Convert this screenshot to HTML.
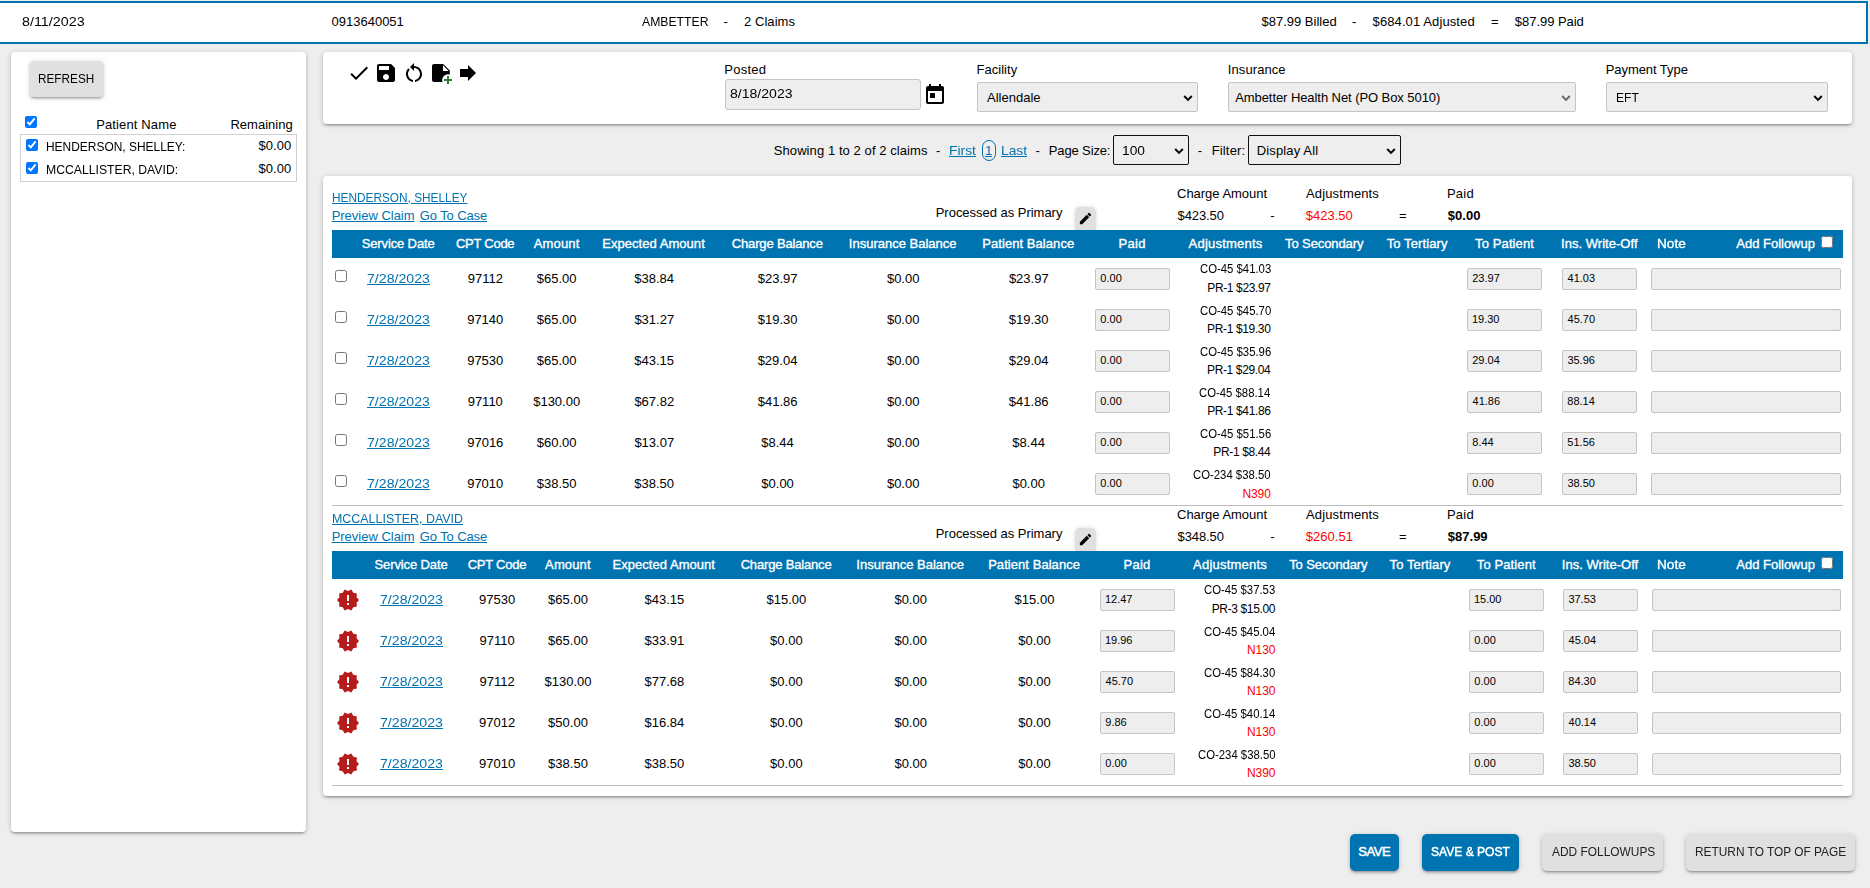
<!DOCTYPE html>
<html><head><meta charset="utf-8"><title>Payment Posting</title>
<style>
html,body{margin:0;padding:0;}
body{width:1870px;height:888px;overflow:hidden;position:relative;background:#eeeeee;font-family:"Liberation Sans", sans-serif;color:#000;}
.t{position:absolute;white-space:nowrap;}
.b{position:absolute;}
input[type=checkbox]{position:absolute;margin:0;width:12px;height:12px;}
</style></head><body>
<div class="b" style="left:-2px;top:1px;width:1870px;height:43px;border:2px solid #0073b1;background:#fff;box-sizing:border-box;"></div>
<div class="t" style="left:21.68px;top:12.90px;font-size:13px;line-height:17px;transform-origin:0 0;transform:scaleX(1.1017);">8/11/2023</div>
<div class="t" style="left:331.49px;top:12.90px;font-size:13px;line-height:17px;letter-spacing:0.006px;">0913640051</div>
<div class="t" style="left:641.98px;top:12.90px;font-size:13px;line-height:17px;transform-origin:0 0;transform:scaleX(0.9394);">AMBETTER</div>
<div class="t" style="left:723.53px;top:12.90px;font-size:13px;line-height:17px;">-</div>
<div class="t" style="left:744.05px;top:12.90px;font-size:13px;line-height:17px;letter-spacing:0.050px;">2 Claims</div>
<div class="t" style="left:1261.46px;top:12.90px;font-size:13px;line-height:17px;letter-spacing:0.001px;">$87.99 Billed</div>
<div class="t" style="left:1352.03px;top:12.90px;font-size:13px;line-height:17px;">-</div>
<div class="t" style="left:1372.56px;top:12.90px;font-size:13px;line-height:17px;letter-spacing:0.107px;">$684.01 Adjusted</div>
<div class="t" style="left:1490.96px;top:12.90px;font-size:13px;line-height:17px;">=</div>
<div class="t" style="left:1514.86px;top:12.90px;font-size:13px;line-height:17px;letter-spacing:-0.042px;">$87.99 Paid</div>
<div class="b" style="left:11px;top:52px;width:295px;height:780px;background:#fff;border-radius:4px;box-shadow:0 2px 2px 0 rgba(0,0,0,.14),0 3px 1px -2px rgba(0,0,0,.12),0 1px 5px 0 rgba(0,0,0,.2);"></div>
<div class="b" style="left:30px;top:61px;width:73px;height:36px;background:#e0e0e0;border-radius:4px;box-shadow:0 2px 2px 0 rgba(0,0,0,.14),0 3px 1px -2px rgba(0,0,0,.12),0 1px 5px 0 rgba(0,0,0,.2);"></div>
<div class="t" style="left:38.33px;top:70.20px;font-size:13px;line-height:17px;transform-origin:0 0;transform:scaleX(0.9067);">REFRESH</div>
<input type="checkbox" checked style="left:25px;top:116px">
<div class="t" style="left:96.13px;top:116.20px;font-size:13px;line-height:17px;letter-spacing:0.135px;">Patient Name</div>
<div class="t" style="left:230.43px;top:116.20px;font-size:13px;line-height:17px;letter-spacing:0.007px;">Remaining</div>
<div class="b" style="left:20px;top:134px;width:277px;height:48px;border:1px solid #d0d0d0;box-sizing:border-box;"></div>
<input type="checkbox" checked style="left:26px;top:139px">
<input type="checkbox" checked style="left:26px;top:162px">
<div class="t" style="left:46.42px;top:137.80px;font-size:13px;line-height:17px;transform-origin:0 0;transform:scaleX(0.9186);">HENDERSON, SHELLEY:</div>
<div class="t" style="left:258.46px;top:137.00px;font-size:13px;line-height:17px;letter-spacing:0.081px;">$0.00</div>
<div class="t" style="left:46.40px;top:160.70px;font-size:13px;line-height:17px;transform-origin:0 0;transform:scaleX(0.9395);">MCCALLISTER, DAVID:</div>
<div class="t" style="left:258.46px;top:159.60px;font-size:13px;line-height:17px;letter-spacing:0.081px;">$0.00</div>
<div class="b" style="left:323px;top:52px;width:1529px;height:72px;background:#fff;border-radius:4px;box-shadow:0 2px 2px 0 rgba(0,0,0,.14),0 3px 1px -2px rgba(0,0,0,.12),0 1px 5px 0 rgba(0,0,0,.2);"></div>
<svg class="b" style="left:347px;top:61.2px;width:24px;height:24px" viewBox="0 0 24 24"><path fill="#000" d="M9 16.17L4.83 12l-1.42 1.41L9 19 21 7l-1.41-1.41z"/></svg>
<svg class="b" style="left:373.8px;top:61px;width:24px;height:24px" viewBox="0 0 24 24"><path fill="#000" d="M17 3H5c-1.11 0-2 .9-2 2v14c0 1.1.89 2 2 2h14c1.1 0 2-.9 2-2V7l-4-4zm-5 16c-1.66 0-3-1.34-3-3s1.34-3 3-3 3 1.34 3 3-1.34 3-3 3zm3-10H5V5h10v4z"/></svg>
<svg class="b" style="left:402.1px;top:61.1px;width:24px;height:24px" viewBox="0 0 24 24"><path fill="#000" d="M12 5V2L8 6l4 4V7c3.31 0 6 2.69 6 6 0 2.97-2.17 5.43-5 5.91v2.02c3.95-.49 7-3.85 7-7.93 0-4.42-3.58-8-8-8zm-6 8c0-1.65.67-3.15 1.76-4.24L6.34 7.34C4.9 8.79 4 10.79 4 13c0 4.08 3.05 7.44 7 7.93v-2.02c-2.83-.48-5-2.94-5-5.91z"/></svg>
<svg class="b" style="left:429px;top:61px;width:26px;height:26px" viewBox="0 0 26 26"><defs><mask id="fm"><rect width="26" height="26" fill="#fff"/><circle cx="19" cy="19" r="5.8" fill="#000"/></mask></defs><path mask="url(#fm)" fill="#000" d="M5 3h9.2l6.6 6.6V19c0 1.1-.9 2-2 2H5c-1.1 0-2-.9-2-2V5c0-1.1.9-2 2-2z"/><path fill="#fff" d="M14 4.2V10h5.6z"/><path fill="#2e7d32" d="M18 15h2v3h3v2h-3v3h-2v-3h-3v-2h3z"/></svg>
<svg class="b" style="left:456px;top:61.2px;width:24px;height:24px" viewBox="0 0 24 24"><path fill="#000" d="M12 8V4l8 8-8 8v-4H4V8z"/></svg>
<div class="t" style="left:724.33px;top:61.00px;font-size:13px;line-height:17px;letter-spacing:0.226px;">Posted</div>
<div class="b" style="left:725px;top:79px;width:196px;height:31px;background:#eeeeee;border:1px solid #c4c4c4;border-radius:3px;box-sizing:border-box;"></div>
<div class="t" style="left:730.40px;top:85.00px;font-size:13px;line-height:17px;transform-origin:0 0;transform:scaleX(1.0810);">8/18/2023</div>
<svg class="b" style="left:923.1px;top:83.1px;width:24px;height:24px" viewBox="0 0 24 24"><path fill="#000" d="M19 3h-1V1h-2v2H8V1H6v2H5c-1.11 0-1.99.9-1.99 2L3 19c0 1.1.89 2 2 2h14c1.1 0 2-.9 2-2V5c0-1.1-.9-2-2-2zm0 16H5V8h14v11zM7 10h5v5H7z"/></svg>
<div class="t" style="left:976.43px;top:61.10px;font-size:13px;line-height:17px;letter-spacing:0.050px;">Facility</div>
<div class="b" style="left:977px;top:82px;width:221px;height:30px;background:#eeeeee;border:1px solid #c4c4c4;border-radius:2px;box-sizing:border-box;"></div>
<svg class="b" style="left:1182px;top:91.5px;width:12px;height:12px" viewBox="0 0 12 12"><path d="M2.2 4L6 7.8 9.8 4" fill="none" stroke="#000" stroke-width="1.9"/></svg>
<div class="t" style="left:986.97px;top:89.00px;font-size:13px;line-height:17px;letter-spacing:0.014px;">Allendale</div>
<div class="t" style="left:1227.80px;top:60.90px;font-size:13px;line-height:17px;letter-spacing:0.086px;">Insurance</div>
<div class="b" style="left:1228px;top:82px;width:348px;height:30px;background:#eeeeee;border:1px solid #c4c4c4;border-radius:2px;box-sizing:border-box;"></div>
<svg class="b" style="left:1560px;top:91.5px;width:12px;height:12px" viewBox="0 0 12 12"><path d="M2.2 4L6 7.8 9.8 4" fill="none" stroke="#666" stroke-width="1.9"/></svg>
<div class="t" style="left:1235.17px;top:88.80px;font-size:13px;line-height:17px;letter-spacing:-0.070px;">Ambetter Health Net (PO Box 5010)</div>
<div class="t" style="left:1605.73px;top:61.20px;font-size:13px;line-height:17px;letter-spacing:-0.066px;">Payment Type</div>
<div class="b" style="left:1606px;top:82px;width:222px;height:30px;background:#eeeeee;border:1px solid #c4c4c4;border-radius:2px;box-sizing:border-box;"></div>
<svg class="b" style="left:1812px;top:91.5px;width:12px;height:12px" viewBox="0 0 12 12"><path d="M2.2 4L6 7.8 9.8 4" fill="none" stroke="#000" stroke-width="1.9"/></svg>
<div class="t" style="left:1615.61px;top:88.80px;font-size:13px;line-height:17px;transform-origin:0 0;transform:scaleX(0.9314);">EFT</div>
<div class="t" style="left:773.80px;top:142.00px;font-size:13px;line-height:17px;letter-spacing:0.077px;">Showing 1 to 2 of 2 claims</div>
<div class="t" style="left:936.03px;top:142.00px;font-size:13px;line-height:17px;">-</div>
<div class="t" style="left:949.06px;top:142.00px;font-size:13px;line-height:17px;color:#0072b0;transform-origin:0 0;transform:scaleX(1.0657);text-decoration:underline;">First</div>
<div class="b" style="left:982px;top:139.5px;width:13.5px;height:21.5px;border:1px solid #0072b0;border-radius:7px;box-sizing:border-box;"></div>
<div class="t" style="left:984.91px;top:142.00px;font-size:13px;line-height:17px;color:#0072b0;text-decoration:underline;">1</div>
<div class="t" style="left:1000.87px;top:142.00px;font-size:13px;line-height:17px;color:#0072b0;transform-origin:0 0;transform:scaleX(1.0592);text-decoration:underline;">Last</div>
<div class="t" style="left:1035.43px;top:142.00px;font-size:13px;line-height:17px;">-</div>
<div class="t" style="left:1048.83px;top:142.00px;font-size:13px;line-height:17px;letter-spacing:-0.137px;">Page Size:</div>
<div class="b" style="left:1113px;top:135px;width:76px;height:30px;background:#eeeeee;border:1px solid #111;border-radius:2px;box-sizing:border-box;"></div>
<svg class="b" style="left:1173px;top:144.5px;width:12px;height:12px" viewBox="0 0 12 12"><path d="M2.2 4L6 7.8 9.8 4" fill="none" stroke="#000" stroke-width="1.9"/></svg>
<div class="t" style="left:1121.95px;top:142.00px;font-size:13px;line-height:17px;transform-origin:0 0;transform:scaleX(1.0600);">100</div>
<div class="t" style="left:1197.83px;top:142.00px;font-size:13px;line-height:17px;">-</div>
<div class="t" style="left:1211.63px;top:142.00px;font-size:13px;line-height:17px;letter-spacing:0.175px;">Filter:</div>
<div class="b" style="left:1248px;top:135px;width:153px;height:30px;background:#eeeeee;border:1px solid #111;border-radius:2px;box-sizing:border-box;"></div>
<svg class="b" style="left:1385px;top:144.5px;width:12px;height:12px" viewBox="0 0 12 12"><path d="M2.2 4L6 7.8 9.8 4" fill="none" stroke="#000" stroke-width="1.9"/></svg>
<div class="t" style="left:1256.73px;top:142.00px;font-size:13px;line-height:17px;letter-spacing:0.137px;">Display All</div>
<div class="b" style="left:323px;top:176px;width:1529px;height:620px;background:#fff;border-radius:4px;box-shadow:0 2px 2px 0 rgba(0,0,0,.14),0 3px 1px -2px rgba(0,0,0,.12),0 1px 5px 0 rgba(0,0,0,.2);"></div>
<div class="t" style="left:331.73px;top:188.80px;font-size:13px;line-height:17px;color:#0072b0;transform-origin:0 0;transform:scaleX(0.9100);text-decoration:underline;">HENDERSON, SHELLEY</div>
<div class="t" style="left:331.63px;top:206.50px;font-size:13px;line-height:17px;color:#0072b0;letter-spacing:-0.012px;text-decoration:underline;">Preview Claim</div>
<div class="t" style="left:419.85px;top:206.50px;font-size:13px;line-height:17px;color:#0072b0;letter-spacing:-0.120px;text-decoration:underline;">Go To Case</div>
<div class="t" style="left:935.73px;top:203.90px;font-size:13px;line-height:17px;letter-spacing:-0.024px;">Processed as Primary</div>
<div class="b" style="left:1076px;top:207px;width:19px;height:22.5px;background:#e0e0e0;border-radius:3px;box-shadow:0 2px 2px 0 rgba(0,0,0,.14),0 3px 1px -2px rgba(0,0,0,.12),0 1px 5px 0 rgba(0,0,0,.2);"></div>
<svg class="b" style="left:1077.6px;top:210.8px;width:15px;height:15px" viewBox="0 0 24 24"><path d="M3 17.25V21h3.75L17.81 9.94l-3.75-3.75L3 17.25zM20.71 7.04c.39-.39.39-1.02 0-1.41l-2.34-2.34c-.39-.39-1.02-.39-1.41 0l-1.83 1.83 3.75 3.75 1.83-1.83z"/></svg>
<div class="t" style="left:1177.04px;top:185.00px;font-size:13px;line-height:17px;letter-spacing:-0.024px;">Charge Amount</div>
<div class="t" style="left:1177.56px;top:206.70px;font-size:13px;line-height:17px;letter-spacing:-0.091px;">$423.50</div>
<div class="t" style="left:1270.23px;top:206.70px;font-size:13px;line-height:17px;">-</div>
<div class="t" style="left:1305.97px;top:185.00px;font-size:13px;line-height:17px;letter-spacing:0.137px;">Adjustments</div>
<div class="t" style="left:1305.86px;top:206.70px;font-size:13px;line-height:17px;color:#ff0000;letter-spacing:-0.008px;">$423.50</div>
<div class="t" style="left:1398.96px;top:206.70px;font-size:13px;line-height:17px;">=</div>
<div class="t" style="left:1446.93px;top:185.00px;font-size:13px;line-height:17px;letter-spacing:0.228px;">Paid</div>
<div class="t" style="left:1447.83px;top:206.70px;font-size:13px;line-height:17px;font-weight:bold;">$0.00</div>
<div class="b" style="left:332px;top:230px;width:1511px;height:28px;background:#0073b1;"></div>
<div class="t" style="left:361.65px;top:234.70px;font-size:13px;line-height:17px;color:#fff;letter-spacing:-0.122px;-webkit-text-stroke:0.35px #fff;">Service Date</div>
<div class="t" style="left:455.94px;top:234.70px;font-size:13px;line-height:17px;color:#fff;letter-spacing:-0.259px;-webkit-text-stroke:0.35px #fff;">CPT Code</div>
<div class="t" style="left:533.77px;top:234.70px;font-size:13px;line-height:17px;color:#fff;letter-spacing:0.144px;-webkit-text-stroke:0.35px #fff;">Amount</div>
<div class="t" style="left:602.23px;top:234.70px;font-size:13px;line-height:17px;color:#fff;letter-spacing:0.046px;-webkit-text-stroke:0.35px #fff;">Expected Amount</div>
<div class="t" style="left:731.84px;top:234.70px;font-size:13px;line-height:17px;color:#fff;letter-spacing:-0.168px;-webkit-text-stroke:0.35px #fff;">Charge Balance</div>
<div class="t" style="left:848.85px;top:234.70px;font-size:13px;line-height:17px;color:#fff;letter-spacing:-0.001px;-webkit-text-stroke:0.35px #fff;">Insurance Balance</div>
<div class="t" style="left:982.33px;top:234.70px;font-size:13px;line-height:17px;color:#fff;letter-spacing:0.055px;-webkit-text-stroke:0.35px #fff;">Patient Balance</div>
<div class="t" style="left:1118.53px;top:234.70px;font-size:13px;line-height:17px;color:#fff;letter-spacing:0.295px;-webkit-text-stroke:0.35px #fff;">Paid</div>
<div class="t" style="left:1188.62px;top:234.70px;font-size:13px;line-height:17px;color:#fff;letter-spacing:0.207px;-webkit-text-stroke:0.35px #fff;">Adjustments</div>
<div class="t" style="left:1285.06px;top:234.70px;font-size:13px;line-height:17px;color:#fff;letter-spacing:-0.098px;-webkit-text-stroke:0.35px #fff;">To Secondary</div>
<div class="t" style="left:1386.66px;top:234.70px;font-size:13px;line-height:17px;color:#fff;letter-spacing:0.109px;-webkit-text-stroke:0.35px #fff;">To Tertiary</div>
<div class="t" style="left:1475.11px;top:234.70px;font-size:13px;line-height:17px;color:#fff;letter-spacing:0.107px;-webkit-text-stroke:0.35px #fff;">To Patient</div>
<div class="t" style="left:1561.05px;top:234.70px;font-size:13px;line-height:17px;color:#fff;letter-spacing:0.030px;-webkit-text-stroke:0.35px #fff;">Ins. Write-Off</div>
<div class="t" style="left:1656.78px;top:234.70px;font-size:13px;line-height:17px;color:#fff;transform-origin:0 0;transform:scaleX(1.0497);-webkit-text-stroke:0.35px #fff;">Note</div>
<div class="t" style="left:1736.37px;top:234.70px;font-size:13px;line-height:17px;color:#fff;letter-spacing:-0.018px;-webkit-text-stroke:0.35px #fff;">Add Followup</div>
<input type="checkbox" style="left:1821px;top:236px">
<input type="checkbox" style="left:335px;top:270px">
<div class="t" style="left:366.68px;top:270.20px;font-size:13px;line-height:17px;color:#0072b0;transform-origin:0 0;transform:scaleX(1.0883);text-decoration:underline;">7/28/2023</div>
<div class="t" style="left:467.73px;top:270.20px;font-size:13px;line-height:17px;">97112</div>
<div class="t" style="left:536.80px;top:270.20px;font-size:13px;line-height:17px;">$65.00</div>
<div class="t" style="left:634.24px;top:270.20px;font-size:13px;line-height:17px;">$38.84</div>
<div class="t" style="left:757.78px;top:270.20px;font-size:13px;line-height:17px;">$23.97</div>
<div class="t" style="left:886.92px;top:270.20px;font-size:13px;line-height:17px;">$0.00</div>
<div class="t" style="left:1008.88px;top:270.20px;font-size:13px;line-height:17px;">$23.97</div>
<div class="b" style="left:1095px;top:268px;width:75px;height:22px;background:#eeeeee;border:1px solid #c4c4c4;border-radius:2px;box-sizing:border-box;"></div>
<div class="t" style="left:1100.37px;top:270.89px;font-size:11px;line-height:15px;">0.00</div>
<div class="b" style="left:1467px;top:268px;width:75px;height:22px;background:#eeeeee;border:1px solid #c4c4c4;border-radius:2px;box-sizing:border-box;"></div>
<div class="t" style="left:1472.25px;top:270.89px;font-size:11px;line-height:15px;">23.97</div>
<div class="b" style="left:1562px;top:268px;width:75px;height:22px;background:#eeeeee;border:1px solid #c4c4c4;border-radius:2px;box-sizing:border-box;"></div>
<div class="t" style="left:1567.55px;top:270.89px;font-size:11px;line-height:15px;">41.03</div>
<div class="b" style="left:1651px;top:268px;width:190px;height:22px;background:#eeeeee;border:1px solid #c4c4c4;border-radius:2px;box-sizing:border-box;"></div>
<div class="t" style="left:1199.66px;top:260.74px;font-size:12px;line-height:16px;transform-origin:0 0;transform:scaleX(0.9450);">CO-45 $41.03</div>
<div class="t" style="left:1207.24px;top:279.74px;font-size:12px;line-height:16px;letter-spacing:-0.362px;">PR-1 $23.97</div>
<input type="checkbox" style="left:335px;top:311px">
<div class="t" style="left:366.68px;top:311.20px;font-size:13px;line-height:17px;color:#0072b0;transform-origin:0 0;transform:scaleX(1.0883);text-decoration:underline;">7/28/2023</div>
<div class="t" style="left:467.17px;top:311.20px;font-size:13px;line-height:17px;">97140</div>
<div class="t" style="left:536.80px;top:311.20px;font-size:13px;line-height:17px;">$65.00</div>
<div class="t" style="left:634.38px;top:311.20px;font-size:13px;line-height:17px;">$31.27</div>
<div class="t" style="left:757.70px;top:311.20px;font-size:13px;line-height:17px;">$19.30</div>
<div class="t" style="left:886.92px;top:311.20px;font-size:13px;line-height:17px;">$0.00</div>
<div class="t" style="left:1008.80px;top:311.20px;font-size:13px;line-height:17px;">$19.30</div>
<div class="b" style="left:1095px;top:309px;width:75px;height:22px;background:#eeeeee;border:1px solid #c4c4c4;border-radius:2px;box-sizing:border-box;"></div>
<div class="t" style="left:1100.37px;top:311.89px;font-size:11px;line-height:15px;">0.00</div>
<div class="b" style="left:1467px;top:309px;width:75px;height:22px;background:#eeeeee;border:1px solid #c4c4c4;border-radius:2px;box-sizing:border-box;"></div>
<div class="t" style="left:1471.96px;top:311.89px;font-size:11px;line-height:15px;">19.30</div>
<div class="b" style="left:1562px;top:309px;width:75px;height:22px;background:#eeeeee;border:1px solid #c4c4c4;border-radius:2px;box-sizing:border-box;"></div>
<div class="t" style="left:1567.55px;top:311.89px;font-size:11px;line-height:15px;">45.70</div>
<div class="b" style="left:1651px;top:309px;width:190px;height:22px;background:#eeeeee;border:1px solid #c4c4c4;border-radius:2px;box-sizing:border-box;"></div>
<div class="t" style="left:1199.60px;top:302.74px;font-size:12px;line-height:16px;transform-origin:0 0;transform:scaleX(0.9450);">CO-45 $45.70</div>
<div class="t" style="left:1207.11px;top:320.74px;font-size:12px;line-height:16px;letter-spacing:-0.363px;">PR-1 $19.30</div>
<input type="checkbox" style="left:335px;top:352px">
<div class="t" style="left:366.68px;top:352.20px;font-size:13px;line-height:17px;color:#0072b0;transform-origin:0 0;transform:scaleX(1.0883);text-decoration:underline;">7/28/2023</div>
<div class="t" style="left:467.17px;top:352.20px;font-size:13px;line-height:17px;">97530</div>
<div class="t" style="left:536.80px;top:352.20px;font-size:13px;line-height:17px;">$65.00</div>
<div class="t" style="left:634.32px;top:352.20px;font-size:13px;line-height:17px;">$43.15</div>
<div class="t" style="left:757.64px;top:352.20px;font-size:13px;line-height:17px;">$29.04</div>
<div class="t" style="left:886.92px;top:352.20px;font-size:13px;line-height:17px;">$0.00</div>
<div class="t" style="left:1008.74px;top:352.20px;font-size:13px;line-height:17px;">$29.04</div>
<div class="b" style="left:1095px;top:350px;width:75px;height:22px;background:#eeeeee;border:1px solid #c4c4c4;border-radius:2px;box-sizing:border-box;"></div>
<div class="t" style="left:1100.37px;top:352.89px;font-size:11px;line-height:15px;">0.00</div>
<div class="b" style="left:1467px;top:350px;width:75px;height:22px;background:#eeeeee;border:1px solid #c4c4c4;border-radius:2px;box-sizing:border-box;"></div>
<div class="t" style="left:1472.25px;top:352.89px;font-size:11px;line-height:15px;">29.04</div>
<div class="b" style="left:1562px;top:350px;width:75px;height:22px;background:#eeeeee;border:1px solid #c4c4c4;border-radius:2px;box-sizing:border-box;"></div>
<div class="t" style="left:1567.38px;top:352.89px;font-size:11px;line-height:15px;">35.96</div>
<div class="b" style="left:1651px;top:350px;width:190px;height:22px;background:#eeeeee;border:1px solid #c4c4c4;border-radius:2px;box-sizing:border-box;"></div>
<div class="t" style="left:1199.66px;top:343.74px;font-size:12px;line-height:16px;transform-origin:0 0;transform:scaleX(0.9450);">CO-45 $35.96</div>
<div class="t" style="left:1207.00px;top:361.74px;font-size:12px;line-height:16px;letter-spacing:-0.363px;">PR-1 $29.04</div>
<input type="checkbox" style="left:335px;top:393px">
<div class="t" style="left:366.68px;top:393.20px;font-size:13px;line-height:17px;color:#0072b0;transform-origin:0 0;transform:scaleX(1.0883);text-decoration:underline;">7/28/2023</div>
<div class="t" style="left:467.66px;top:393.20px;font-size:13px;line-height:17px;">97110</div>
<div class="t" style="left:533.18px;top:393.20px;font-size:13px;line-height:17px;">$130.00</div>
<div class="t" style="left:634.38px;top:393.20px;font-size:13px;line-height:17px;">$67.82</div>
<div class="t" style="left:757.74px;top:393.20px;font-size:13px;line-height:17px;">$41.86</div>
<div class="t" style="left:886.92px;top:393.20px;font-size:13px;line-height:17px;">$0.00</div>
<div class="t" style="left:1008.84px;top:393.20px;font-size:13px;line-height:17px;">$41.86</div>
<div class="b" style="left:1095px;top:391px;width:75px;height:22px;background:#eeeeee;border:1px solid #c4c4c4;border-radius:2px;box-sizing:border-box;"></div>
<div class="t" style="left:1100.37px;top:393.89px;font-size:11px;line-height:15px;">0.00</div>
<div class="b" style="left:1467px;top:391px;width:75px;height:22px;background:#eeeeee;border:1px solid #c4c4c4;border-radius:2px;box-sizing:border-box;"></div>
<div class="t" style="left:1472.55px;top:393.89px;font-size:11px;line-height:15px;">41.86</div>
<div class="b" style="left:1562px;top:391px;width:75px;height:22px;background:#eeeeee;border:1px solid #c4c4c4;border-radius:2px;box-sizing:border-box;"></div>
<div class="t" style="left:1567.33px;top:393.89px;font-size:11px;line-height:15px;">88.14</div>
<div class="b" style="left:1651px;top:391px;width:190px;height:22px;background:#eeeeee;border:1px solid #c4c4c4;border-radius:2px;box-sizing:border-box;"></div>
<div class="t" style="left:1199.49px;top:384.74px;font-size:12px;line-height:16px;transform-origin:0 0;transform:scaleX(0.9450);">CO-45 $88.14</div>
<div class="t" style="left:1207.17px;top:402.74px;font-size:12px;line-height:16px;letter-spacing:-0.362px;">PR-1 $41.86</div>
<input type="checkbox" style="left:335px;top:434px">
<div class="t" style="left:366.68px;top:434.20px;font-size:13px;line-height:17px;color:#0072b0;transform-origin:0 0;transform:scaleX(1.0883);text-decoration:underline;">7/28/2023</div>
<div class="t" style="left:467.20px;top:434.20px;font-size:13px;line-height:17px;">97016</div>
<div class="t" style="left:536.80px;top:434.20px;font-size:13px;line-height:17px;">$60.00</div>
<div class="t" style="left:634.38px;top:434.20px;font-size:13px;line-height:17px;">$13.07</div>
<div class="t" style="left:761.25px;top:434.20px;font-size:13px;line-height:17px;">$8.44</div>
<div class="t" style="left:886.92px;top:434.20px;font-size:13px;line-height:17px;">$0.00</div>
<div class="t" style="left:1012.35px;top:434.20px;font-size:13px;line-height:17px;">$8.44</div>
<div class="b" style="left:1095px;top:432px;width:75px;height:22px;background:#eeeeee;border:1px solid #c4c4c4;border-radius:2px;box-sizing:border-box;"></div>
<div class="t" style="left:1100.37px;top:434.89px;font-size:11px;line-height:15px;">0.00</div>
<div class="b" style="left:1467px;top:432px;width:75px;height:22px;background:#eeeeee;border:1px solid #c4c4c4;border-radius:2px;box-sizing:border-box;"></div>
<div class="t" style="left:1472.33px;top:434.89px;font-size:11px;line-height:15px;">8.44</div>
<div class="b" style="left:1562px;top:432px;width:75px;height:22px;background:#eeeeee;border:1px solid #c4c4c4;border-radius:2px;box-sizing:border-box;"></div>
<div class="t" style="left:1567.36px;top:434.89px;font-size:11px;line-height:15px;">51.56</div>
<div class="b" style="left:1651px;top:432px;width:190px;height:22px;background:#eeeeee;border:1px solid #c4c4c4;border-radius:2px;box-sizing:border-box;"></div>
<div class="t" style="left:1199.66px;top:425.74px;font-size:12px;line-height:16px;transform-origin:0 0;transform:scaleX(0.9450);">CO-45 $51.56</div>
<div class="t" style="left:1213.32px;top:443.74px;font-size:12px;line-height:16px;letter-spacing:-0.363px;">PR-1 $8.44</div>
<input type="checkbox" style="left:335px;top:475px">
<div class="t" style="left:366.68px;top:475.20px;font-size:13px;line-height:17px;color:#0072b0;transform-origin:0 0;transform:scaleX(1.0883);text-decoration:underline;">7/28/2023</div>
<div class="t" style="left:467.17px;top:475.20px;font-size:13px;line-height:17px;">97010</div>
<div class="t" style="left:536.80px;top:475.20px;font-size:13px;line-height:17px;">$38.50</div>
<div class="t" style="left:634.30px;top:475.20px;font-size:13px;line-height:17px;">$38.50</div>
<div class="t" style="left:761.32px;top:475.20px;font-size:13px;line-height:17px;">$0.00</div>
<div class="t" style="left:886.92px;top:475.20px;font-size:13px;line-height:17px;">$0.00</div>
<div class="t" style="left:1012.42px;top:475.20px;font-size:13px;line-height:17px;">$0.00</div>
<div class="b" style="left:1095px;top:473px;width:75px;height:22px;background:#eeeeee;border:1px solid #c4c4c4;border-radius:2px;box-sizing:border-box;"></div>
<div class="t" style="left:1100.37px;top:475.89px;font-size:11px;line-height:15px;">0.00</div>
<div class="b" style="left:1467px;top:473px;width:75px;height:22px;background:#eeeeee;border:1px solid #c4c4c4;border-radius:2px;box-sizing:border-box;"></div>
<div class="t" style="left:1472.37px;top:475.89px;font-size:11px;line-height:15px;">0.00</div>
<div class="b" style="left:1562px;top:473px;width:75px;height:22px;background:#eeeeee;border:1px solid #c4c4c4;border-radius:2px;box-sizing:border-box;"></div>
<div class="t" style="left:1567.38px;top:475.89px;font-size:11px;line-height:15px;">38.50</div>
<div class="b" style="left:1651px;top:473px;width:190px;height:22px;background:#eeeeee;border:1px solid #c4c4c4;border-radius:2px;box-sizing:border-box;"></div>
<div class="t" style="left:1193.30px;top:466.74px;font-size:12px;line-height:16px;transform-origin:0 0;transform:scaleX(0.9450);">CO-234 $38.50</div>
<div class="t" style="left:1242.46px;top:485.74px;font-size:12px;line-height:16px;color:#ff0000;letter-spacing:-0.091px;">N390</div>
<div class="b" style="left:332px;top:505px;width:1511px;height:1px;background:#bdbdbd;"></div>
<div class="t" style="left:331.68px;top:509.80px;font-size:13px;line-height:17px;color:#0072b0;transform-origin:0 0;transform:scaleX(0.9563);text-decoration:underline;">MCCALLISTER, DAVID</div>
<div class="t" style="left:331.63px;top:527.50px;font-size:13px;line-height:17px;color:#0072b0;letter-spacing:-0.012px;text-decoration:underline;">Preview Claim</div>
<div class="t" style="left:419.85px;top:527.50px;font-size:13px;line-height:17px;color:#0072b0;letter-spacing:-0.120px;text-decoration:underline;">Go To Case</div>
<div class="t" style="left:935.73px;top:524.90px;font-size:13px;line-height:17px;letter-spacing:-0.024px;">Processed as Primary</div>
<div class="b" style="left:1076px;top:528px;width:19px;height:22.5px;background:#e0e0e0;border-radius:3px;box-shadow:0 2px 2px 0 rgba(0,0,0,.14),0 3px 1px -2px rgba(0,0,0,.12),0 1px 5px 0 rgba(0,0,0,.2);"></div>
<svg class="b" style="left:1077.6px;top:531.8px;width:15px;height:15px" viewBox="0 0 24 24"><path d="M3 17.25V21h3.75L17.81 9.94l-3.75-3.75L3 17.25zM20.71 7.04c.39-.39.39-1.02 0-1.41l-2.34-2.34c-.39-.39-1.02-.39-1.41 0l-1.83 1.83 3.75 3.75 1.83-1.83z"/></svg>
<div class="t" style="left:1177.04px;top:506.00px;font-size:13px;line-height:17px;letter-spacing:-0.024px;">Charge Amount</div>
<div class="t" style="left:1177.56px;top:527.70px;font-size:13px;line-height:17px;letter-spacing:-0.091px;">$348.50</div>
<div class="t" style="left:1270.23px;top:527.70px;font-size:13px;line-height:17px;">-</div>
<div class="t" style="left:1305.97px;top:506.00px;font-size:13px;line-height:17px;letter-spacing:0.137px;">Adjustments</div>
<div class="t" style="left:1305.86px;top:527.70px;font-size:13px;line-height:17px;color:#ff0000;letter-spacing:0.014px;">$260.51</div>
<div class="t" style="left:1398.96px;top:527.70px;font-size:13px;line-height:17px;">=</div>
<div class="t" style="left:1446.93px;top:506.00px;font-size:13px;line-height:17px;letter-spacing:0.228px;">Paid</div>
<div class="t" style="left:1447.83px;top:527.70px;font-size:13px;line-height:17px;font-weight:bold;">$87.99</div>
<div class="b" style="left:332px;top:551px;width:1511px;height:28px;background:#0073b1;"></div>
<div class="t" style="left:374.55px;top:555.70px;font-size:13px;line-height:17px;color:#fff;letter-spacing:-0.122px;-webkit-text-stroke:0.35px #fff;">Service Date</div>
<div class="t" style="left:467.74px;top:555.70px;font-size:13px;line-height:17px;color:#fff;letter-spacing:-0.259px;-webkit-text-stroke:0.35px #fff;">CPT Code</div>
<div class="t" style="left:545.07px;top:555.70px;font-size:13px;line-height:17px;color:#fff;letter-spacing:0.144px;-webkit-text-stroke:0.35px #fff;">Amount</div>
<div class="t" style="left:612.43px;top:555.70px;font-size:13px;line-height:17px;color:#fff;letter-spacing:0.046px;-webkit-text-stroke:0.35px #fff;">Expected Amount</div>
<div class="t" style="left:740.64px;top:555.70px;font-size:13px;line-height:17px;color:#fff;letter-spacing:-0.168px;-webkit-text-stroke:0.35px #fff;">Charge Balance</div>
<div class="t" style="left:856.35px;top:555.70px;font-size:13px;line-height:17px;color:#fff;letter-spacing:-0.001px;-webkit-text-stroke:0.35px #fff;">Insurance Balance</div>
<div class="t" style="left:988.13px;top:555.70px;font-size:13px;line-height:17px;color:#fff;letter-spacing:0.055px;-webkit-text-stroke:0.35px #fff;">Patient Balance</div>
<div class="t" style="left:1123.43px;top:555.70px;font-size:13px;line-height:17px;color:#fff;letter-spacing:0.295px;-webkit-text-stroke:0.35px #fff;">Paid</div>
<div class="t" style="left:1193.12px;top:555.70px;font-size:13px;line-height:17px;color:#fff;letter-spacing:0.207px;-webkit-text-stroke:0.35px #fff;">Adjustments</div>
<div class="t" style="left:1289.16px;top:555.70px;font-size:13px;line-height:17px;color:#fff;letter-spacing:-0.098px;-webkit-text-stroke:0.35px #fff;">To Secondary</div>
<div class="t" style="left:1389.56px;top:555.70px;font-size:13px;line-height:17px;color:#fff;letter-spacing:0.109px;-webkit-text-stroke:0.35px #fff;">To Tertiary</div>
<div class="t" style="left:1476.81px;top:555.70px;font-size:13px;line-height:17px;color:#fff;letter-spacing:0.107px;-webkit-text-stroke:0.35px #fff;">To Patient</div>
<div class="t" style="left:1561.75px;top:555.70px;font-size:13px;line-height:17px;color:#fff;letter-spacing:0.030px;-webkit-text-stroke:0.35px #fff;">Ins. Write-Off</div>
<div class="t" style="left:1656.78px;top:555.70px;font-size:13px;line-height:17px;color:#fff;transform-origin:0 0;transform:scaleX(1.0497);-webkit-text-stroke:0.35px #fff;">Note</div>
<div class="t" style="left:1736.37px;top:555.70px;font-size:13px;line-height:17px;color:#fff;letter-spacing:-0.018px;-webkit-text-stroke:0.35px #fff;">Add Followup</div>
<input type="checkbox" style="left:1821px;top:557px">
<svg class="b" style="left:336.1px;top:587.7px;width:24px;height:24px" viewBox="0 0 24 24"><path fill="#b71c1c" d="M23 12l-2.44-2.79.34-3.69-3.61-.82-1.89-3.2L12 2.96 8.6 1.5 6.71 4.69 3.1 5.5l.34 3.7L1 12l2.44 2.79-.34 3.7 3.61.82L8.6 22.5l3.4-1.47 3.4 1.46 1.89-3.19 3.61-.82-.34-3.69L23 12zm-10 5h-2v-2h2v2zm0-4h-2V7h2v6z"/></svg>
<div class="t" style="left:379.58px;top:591.20px;font-size:13px;line-height:17px;color:#0072b0;transform-origin:0 0;transform:scaleX(1.0883);text-decoration:underline;">7/28/2023</div>
<div class="t" style="left:478.97px;top:591.20px;font-size:13px;line-height:17px;">97530</div>
<div class="t" style="left:548.10px;top:591.20px;font-size:13px;line-height:17px;">$65.00</div>
<div class="t" style="left:644.52px;top:591.20px;font-size:13px;line-height:17px;">$43.15</div>
<div class="t" style="left:766.50px;top:591.20px;font-size:13px;line-height:17px;">$15.00</div>
<div class="t" style="left:894.42px;top:591.20px;font-size:13px;line-height:17px;">$0.00</div>
<div class="t" style="left:1014.60px;top:591.20px;font-size:13px;line-height:17px;">$15.00</div>
<div class="b" style="left:1100px;top:589px;width:75px;height:22px;background:#eeeeee;border:1px solid #c4c4c4;border-radius:2px;box-sizing:border-box;"></div>
<div class="t" style="left:1104.96px;top:591.89px;font-size:11px;line-height:15px;">12.47</div>
<div class="b" style="left:1469px;top:589px;width:75px;height:22px;background:#eeeeee;border:1px solid #c4c4c4;border-radius:2px;box-sizing:border-box;"></div>
<div class="t" style="left:1473.96px;top:591.89px;font-size:11px;line-height:15px;">15.00</div>
<div class="b" style="left:1563px;top:589px;width:75px;height:22px;background:#eeeeee;border:1px solid #c4c4c4;border-radius:2px;box-sizing:border-box;"></div>
<div class="t" style="left:1568.38px;top:591.89px;font-size:11px;line-height:15px;">37.53</div>
<div class="b" style="left:1652px;top:589px;width:189px;height:22px;background:#eeeeee;border:1px solid #c4c4c4;border-radius:2px;box-sizing:border-box;"></div>
<div class="t" style="left:1204.26px;top:581.74px;font-size:12px;line-height:16px;transform-origin:0 0;transform:scaleX(0.9450);">CO-45 $37.53</div>
<div class="t" style="left:1211.71px;top:600.74px;font-size:12px;line-height:16px;letter-spacing:-0.363px;">PR-3 $15.00</div>
<svg class="b" style="left:336.1px;top:628.7px;width:24px;height:24px" viewBox="0 0 24 24"><path fill="#b71c1c" d="M23 12l-2.44-2.79.34-3.69-3.61-.82-1.89-3.2L12 2.96 8.6 1.5 6.71 4.69 3.1 5.5l.34 3.7L1 12l2.44 2.79-.34 3.7 3.61.82L8.6 22.5l3.4-1.47 3.4 1.46 1.89-3.19 3.61-.82-.34-3.69L23 12zm-10 5h-2v-2h2v2zm0-4h-2V7h2v6z"/></svg>
<div class="t" style="left:379.58px;top:632.20px;font-size:13px;line-height:17px;color:#0072b0;transform-origin:0 0;transform:scaleX(1.0883);text-decoration:underline;">7/28/2023</div>
<div class="t" style="left:479.46px;top:632.20px;font-size:13px;line-height:17px;">97110</div>
<div class="t" style="left:548.10px;top:632.20px;font-size:13px;line-height:17px;">$65.00</div>
<div class="t" style="left:644.57px;top:632.20px;font-size:13px;line-height:17px;">$33.91</div>
<div class="t" style="left:770.12px;top:632.20px;font-size:13px;line-height:17px;">$0.00</div>
<div class="t" style="left:894.42px;top:632.20px;font-size:13px;line-height:17px;">$0.00</div>
<div class="t" style="left:1018.22px;top:632.20px;font-size:13px;line-height:17px;">$0.00</div>
<div class="b" style="left:1100px;top:630px;width:75px;height:22px;background:#eeeeee;border:1px solid #c4c4c4;border-radius:2px;box-sizing:border-box;"></div>
<div class="t" style="left:1104.96px;top:632.89px;font-size:11px;line-height:15px;">19.96</div>
<div class="b" style="left:1469px;top:630px;width:75px;height:22px;background:#eeeeee;border:1px solid #c4c4c4;border-radius:2px;box-sizing:border-box;"></div>
<div class="t" style="left:1474.37px;top:632.89px;font-size:11px;line-height:15px;">0.00</div>
<div class="b" style="left:1563px;top:630px;width:75px;height:22px;background:#eeeeee;border:1px solid #c4c4c4;border-radius:2px;box-sizing:border-box;"></div>
<div class="t" style="left:1568.55px;top:632.89px;font-size:11px;line-height:15px;">45.04</div>
<div class="b" style="left:1652px;top:630px;width:189px;height:22px;background:#eeeeee;border:1px solid #c4c4c4;border-radius:2px;box-sizing:border-box;"></div>
<div class="t" style="left:1204.09px;top:623.74px;font-size:12px;line-height:16px;transform-origin:0 0;transform:scaleX(0.9450);">CO-45 $45.04</div>
<div class="t" style="left:1247.06px;top:641.74px;font-size:12px;line-height:16px;color:#ff0000;letter-spacing:-0.091px;">N130</div>
<svg class="b" style="left:336.1px;top:669.7px;width:24px;height:24px" viewBox="0 0 24 24"><path fill="#b71c1c" d="M23 12l-2.44-2.79.34-3.69-3.61-.82-1.89-3.2L12 2.96 8.6 1.5 6.71 4.69 3.1 5.5l.34 3.7L1 12l2.44 2.79-.34 3.7 3.61.82L8.6 22.5l3.4-1.47 3.4 1.46 1.89-3.19 3.61-.82-.34-3.69L23 12zm-10 5h-2v-2h2v2zm0-4h-2V7h2v6z"/></svg>
<div class="t" style="left:379.58px;top:673.20px;font-size:13px;line-height:17px;color:#0072b0;transform-origin:0 0;transform:scaleX(1.0883);text-decoration:underline;">7/28/2023</div>
<div class="t" style="left:479.53px;top:673.20px;font-size:13px;line-height:17px;">97112</div>
<div class="t" style="left:544.48px;top:673.20px;font-size:13px;line-height:17px;">$130.00</div>
<div class="t" style="left:644.53px;top:673.20px;font-size:13px;line-height:17px;">$77.68</div>
<div class="t" style="left:770.12px;top:673.20px;font-size:13px;line-height:17px;">$0.00</div>
<div class="t" style="left:894.42px;top:673.20px;font-size:13px;line-height:17px;">$0.00</div>
<div class="t" style="left:1018.22px;top:673.20px;font-size:13px;line-height:17px;">$0.00</div>
<div class="b" style="left:1100px;top:671px;width:75px;height:22px;background:#eeeeee;border:1px solid #c4c4c4;border-radius:2px;box-sizing:border-box;"></div>
<div class="t" style="left:1105.55px;top:673.89px;font-size:11px;line-height:15px;">45.70</div>
<div class="b" style="left:1469px;top:671px;width:75px;height:22px;background:#eeeeee;border:1px solid #c4c4c4;border-radius:2px;box-sizing:border-box;"></div>
<div class="t" style="left:1474.37px;top:673.89px;font-size:11px;line-height:15px;">0.00</div>
<div class="b" style="left:1563px;top:671px;width:75px;height:22px;background:#eeeeee;border:1px solid #c4c4c4;border-radius:2px;box-sizing:border-box;"></div>
<div class="t" style="left:1568.33px;top:673.89px;font-size:11px;line-height:15px;">84.30</div>
<div class="b" style="left:1652px;top:671px;width:189px;height:22px;background:#eeeeee;border:1px solid #c4c4c4;border-radius:2px;box-sizing:border-box;"></div>
<div class="t" style="left:1204.20px;top:664.74px;font-size:12px;line-height:16px;transform-origin:0 0;transform:scaleX(0.9450);">CO-45 $84.30</div>
<div class="t" style="left:1247.06px;top:682.74px;font-size:12px;line-height:16px;color:#ff0000;letter-spacing:-0.091px;">N130</div>
<svg class="b" style="left:336.1px;top:710.7px;width:24px;height:24px" viewBox="0 0 24 24"><path fill="#b71c1c" d="M23 12l-2.44-2.79.34-3.69-3.61-.82-1.89-3.2L12 2.96 8.6 1.5 6.71 4.69 3.1 5.5l.34 3.7L1 12l2.44 2.79-.34 3.7 3.61.82L8.6 22.5l3.4-1.47 3.4 1.46 1.89-3.19 3.61-.82-.34-3.69L23 12zm-10 5h-2v-2h2v2zm0-4h-2V7h2v6z"/></svg>
<div class="t" style="left:379.58px;top:714.20px;font-size:13px;line-height:17px;color:#0072b0;transform-origin:0 0;transform:scaleX(1.0883);text-decoration:underline;">7/28/2023</div>
<div class="t" style="left:479.04px;top:714.20px;font-size:13px;line-height:17px;">97012</div>
<div class="t" style="left:548.10px;top:714.20px;font-size:13px;line-height:17px;">$50.00</div>
<div class="t" style="left:644.44px;top:714.20px;font-size:13px;line-height:17px;">$16.84</div>
<div class="t" style="left:770.12px;top:714.20px;font-size:13px;line-height:17px;">$0.00</div>
<div class="t" style="left:894.42px;top:714.20px;font-size:13px;line-height:17px;">$0.00</div>
<div class="t" style="left:1018.22px;top:714.20px;font-size:13px;line-height:17px;">$0.00</div>
<div class="b" style="left:1100px;top:712px;width:75px;height:22px;background:#eeeeee;border:1px solid #c4c4c4;border-radius:2px;box-sizing:border-box;"></div>
<div class="t" style="left:1105.28px;top:714.89px;font-size:11px;line-height:15px;">9.86</div>
<div class="b" style="left:1469px;top:712px;width:75px;height:22px;background:#eeeeee;border:1px solid #c4c4c4;border-radius:2px;box-sizing:border-box;"></div>
<div class="t" style="left:1474.37px;top:714.89px;font-size:11px;line-height:15px;">0.00</div>
<div class="b" style="left:1563px;top:712px;width:75px;height:22px;background:#eeeeee;border:1px solid #c4c4c4;border-radius:2px;box-sizing:border-box;"></div>
<div class="t" style="left:1568.55px;top:714.89px;font-size:11px;line-height:15px;">40.14</div>
<div class="b" style="left:1652px;top:712px;width:189px;height:22px;background:#eeeeee;border:1px solid #c4c4c4;border-radius:2px;box-sizing:border-box;"></div>
<div class="t" style="left:1204.09px;top:705.74px;font-size:12px;line-height:16px;transform-origin:0 0;transform:scaleX(0.9450);">CO-45 $40.14</div>
<div class="t" style="left:1247.06px;top:723.74px;font-size:12px;line-height:16px;color:#ff0000;letter-spacing:-0.091px;">N130</div>
<svg class="b" style="left:336.1px;top:751.7px;width:24px;height:24px" viewBox="0 0 24 24"><path fill="#b71c1c" d="M23 12l-2.44-2.79.34-3.69-3.61-.82-1.89-3.2L12 2.96 8.6 1.5 6.71 4.69 3.1 5.5l.34 3.7L1 12l2.44 2.79-.34 3.7 3.61.82L8.6 22.5l3.4-1.47 3.4 1.46 1.89-3.19 3.61-.82-.34-3.69L23 12zm-10 5h-2v-2h2v2zm0-4h-2V7h2v6z"/></svg>
<div class="t" style="left:379.58px;top:755.20px;font-size:13px;line-height:17px;color:#0072b0;transform-origin:0 0;transform:scaleX(1.0883);text-decoration:underline;">7/28/2023</div>
<div class="t" style="left:478.97px;top:755.20px;font-size:13px;line-height:17px;">97010</div>
<div class="t" style="left:548.10px;top:755.20px;font-size:13px;line-height:17px;">$38.50</div>
<div class="t" style="left:644.50px;top:755.20px;font-size:13px;line-height:17px;">$38.50</div>
<div class="t" style="left:770.12px;top:755.20px;font-size:13px;line-height:17px;">$0.00</div>
<div class="t" style="left:894.42px;top:755.20px;font-size:13px;line-height:17px;">$0.00</div>
<div class="t" style="left:1018.22px;top:755.20px;font-size:13px;line-height:17px;">$0.00</div>
<div class="b" style="left:1100px;top:753px;width:75px;height:22px;background:#eeeeee;border:1px solid #c4c4c4;border-radius:2px;box-sizing:border-box;"></div>
<div class="t" style="left:1105.37px;top:755.89px;font-size:11px;line-height:15px;">0.00</div>
<div class="b" style="left:1469px;top:753px;width:75px;height:22px;background:#eeeeee;border:1px solid #c4c4c4;border-radius:2px;box-sizing:border-box;"></div>
<div class="t" style="left:1474.37px;top:755.89px;font-size:11px;line-height:15px;">0.00</div>
<div class="b" style="left:1563px;top:753px;width:75px;height:22px;background:#eeeeee;border:1px solid #c4c4c4;border-radius:2px;box-sizing:border-box;"></div>
<div class="t" style="left:1568.38px;top:755.89px;font-size:11px;line-height:15px;">38.50</div>
<div class="b" style="left:1652px;top:753px;width:189px;height:22px;background:#eeeeee;border:1px solid #c4c4c4;border-radius:2px;box-sizing:border-box;"></div>
<div class="t" style="left:1197.90px;top:746.74px;font-size:12px;line-height:16px;transform-origin:0 0;transform:scaleX(0.9450);">CO-234 $38.50</div>
<div class="t" style="left:1247.06px;top:764.74px;font-size:12px;line-height:16px;color:#ff0000;letter-spacing:-0.091px;">N390</div>
<div class="b" style="left:332px;top:785px;width:1511px;height:1px;background:#bdbdbd;"></div>
<div class="b" style="left:1350px;top:834px;width:49px;height:37px;background:#0073b1;border-radius:5px;box-shadow:0 2px 2px 0 rgba(0,0,0,.14),0 3px 1px -2px rgba(0,0,0,.12),0 1px 5px 0 rgba(0,0,0,.2);"></div>
<div class="t" style="left:1358.15px;top:843.10px;font-size:13px;line-height:17px;color:#fff;letter-spacing:-0.422px;-webkit-text-stroke:0.5px #fff;">SAVE</div>
<div class="b" style="left:1422px;top:834px;width:97px;height:37px;background:#0073b1;border-radius:5px;box-shadow:0 2px 2px 0 rgba(0,0,0,.14),0 3px 1px -2px rgba(0,0,0,.12),0 1px 5px 0 rgba(0,0,0,.2);"></div>
<div class="t" style="left:1430.89px;top:843.10px;font-size:13px;line-height:17px;color:#fff;transform-origin:0 0;transform:scaleX(0.9285);-webkit-text-stroke:0.5px #fff;">SAVE &amp; POST</div>
<div class="b" style="left:1542px;top:834px;width:121px;height:37px;background:#e0e0e0;border-radius:5px;box-shadow:0 2px 2px 0 rgba(0,0,0,.14),0 3px 1px -2px rgba(0,0,0,.12),0 1px 5px 0 rgba(0,0,0,.2);"></div>
<div class="t" style="left:1551.53px;top:843.00px;font-size:13px;line-height:17px;color:#222;transform-origin:0 0;transform:scaleX(0.9165);">ADD FOLLOWUPS</div>
<div class="b" style="left:1686px;top:834px;width:169px;height:37px;background:#e0e0e0;border-radius:5px;box-shadow:0 2px 2px 0 rgba(0,0,0,.14),0 3px 1px -2px rgba(0,0,0,.12),0 1px 5px 0 rgba(0,0,0,.2);"></div>
<div class="t" style="left:1694.88px;top:843.00px;font-size:13px;line-height:17px;color:#222;transform-origin:0 0;transform:scaleX(0.9139);">RETURN TO TOP OF PAGE</div>
</body></html>
